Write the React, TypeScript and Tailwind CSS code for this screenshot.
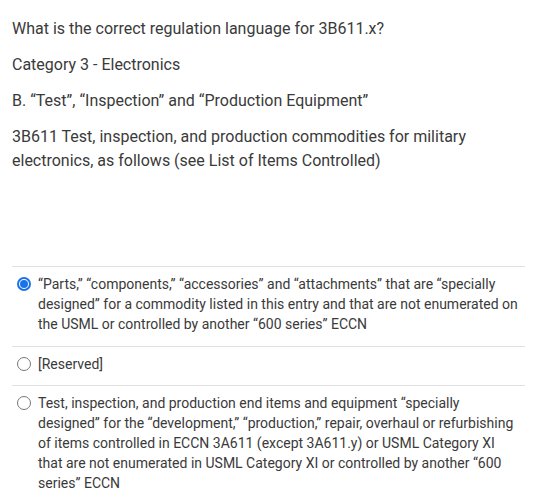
import React from 'react';

const options = [
  {
    text: '“Parts,” “components,” “accessories” and “attachments” that are “specially designed” for a commodity listed in this entry and that are not enumerated on the USML or controlled by another “600 series” ECCN',
    checked: true,
  },
  { text: '[Reserved]', checked: false },
  {
    text: 'Test, inspection, and production end items and equipment “specially designed” for the “development,” “production,” repair, overhaul or refurbishing of items controlled in ECCN 3A611 (except 3A611.y) or USML Category XI that are not enumerated in USML Category XI or controlled by another “600 series” ECCN',
    checked: false,
  },
];

const Radio: React.FC<{ checked: boolean }> = ({ checked }) =>
  checked ? (
    <span className="w-[14px] h-[14px] rounded-full border-2 border-[#1a73e8] flex items-center justify-center flex-shrink-0 mt-[3px]">
      <span className="w-[8px] h-[8px] rounded-full bg-[#1a73e8]" />
    </span>
  ) : (
    <span className="w-[14px] h-[14px] rounded-full border border-[#777] flex-shrink-0 mt-[3px]" />
  );

export default function App() {
  return (
    <div className="w-[537px] h-[499px] bg-white px-3 pt-[17px] text-[#3a3a3a] font-['Roboto',sans-serif]">
      <div className="text-[16px] leading-6 space-y-3">
        <p>What is the correct regulation language for 3B611.x?</p>
        <p>Category 3 - Electronics</p>
        <p>B. “Test”, “Inspection” and “Production Equipment”</p>
        <p>3B611 Test, inspection, and production commodities for military electronics, as follows (see List of Items Controlled)</p>
      </div>

      <div className="mt-[93px] w-[513px]">
        {options.map((opt, i) => (
          <label
            key={i}
            className={`flex items-start gap-[7px] border-t border-[#e2e2e2] pl-[5px] pr-[6px] text-[14px] leading-5 ${i === 0 ? 'pt-[7px] pb-[12px]' : 'pt-[7px] pb-[11px]'}`}
          >
            <Radio checked={opt.checked} />
            <span>{opt.text}</span>
          </label>
        ))}
      </div>
    </div>
  );
}
